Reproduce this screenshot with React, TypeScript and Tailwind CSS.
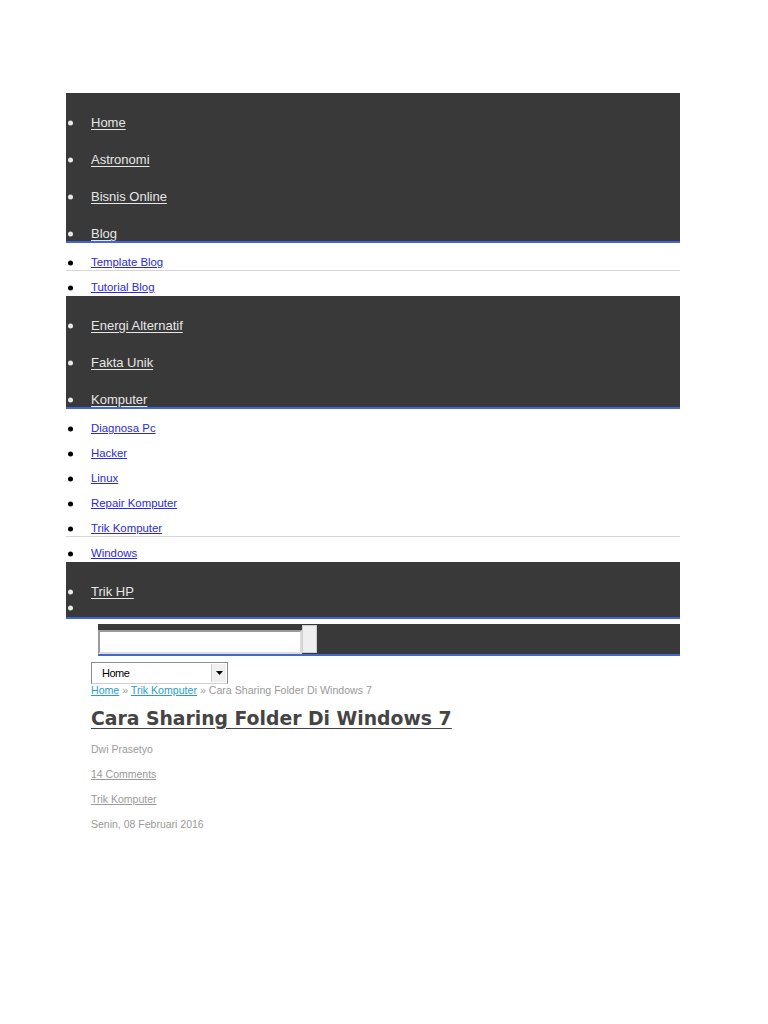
import React from 'react';

const topA = ['Home', 'Astronomi', 'Bisnis Online', 'Blog'];
const subA = ['Template Blog', 'Tutorial Blog'];
const topB = ['Energi Alternatif', 'Fakta Unik', 'Komputer'];
const subB = ['Diagnosa Pc', 'Hacker', 'Linux', 'Repair Komputer', 'Trik Komputer', 'Windows'];

const Bullet = ({ dark }: { dark?: boolean }) => (
  <span className={`absolute left-[2px] top-1/2 -translate-y-1/2 w-[5px] h-[5px] rounded-full ${dark ? 'bg-[#e8e8e8]' : 'bg-black'}`} />
);

const TopItem = ({ label }: { label: string }) => (
  <li className="relative h-[37px] flex items-end">
    <div className="relative w-full h-[15px] flex items-center">
      <Bullet dark />
      <a href="#" className="ml-[25px] text-[13px] leading-[15px] text-[#e6e6e6] underline underline-offset-2">{label}</a>
    </div>
  </li>
);

const SubItem = ({ label, line }: { label: string; line?: boolean }) => (
  <li className={`h-[25px] pt-[10px] ${line ? 'border-b border-[#d6d6d6]' : ''}`}>
    <div className="relative h-[13px] flex items-center">
      <Bullet />
      <a href="#" className="ml-[25px] text-[11.4px] leading-[13px] text-[#2a2ad8] underline underline-offset-1">{label}</a>
    </div>
  </li>
);

const DarkBlock = ({ children }: { children: React.ReactNode }) => (
  <ul className="bg-[#393939] border-b-2 border-[#4466d0]">{children}</ul>
);

const SubList = ({ items }: { items: string[] }) => (
  <ul className="pt-[3px]">
    {items.map((s, i) => (
      <SubItem key={s} label={s} line={i === items.length - 2} />
    ))}
  </ul>
);

export default function App() {
  return (
    <div className="min-h-[1024px] bg-white pt-[93px] font-['Liberation_Sans',Arial,sans-serif]">
      <div className="ml-[66px] w-[614px]">
        <DarkBlock>
          {topA.map((t) => <TopItem key={t} label={t} />)}
        </DarkBlock>
        <SubList items={subA} />
        <DarkBlock>
          {topB.map((t) => <TopItem key={t} label={t} />)}
        </DarkBlock>
        <SubList items={subB} />
        <DarkBlock>
          <TopItem label="Trik HP" />
          <li className="relative h-[18px]">
            <Bullet dark />
          </li>
        </DarkBlock>

        <div className="mt-[5px] ml-[32px] h-[32px] bg-[#393939] border-b-2 border-[#4466d0] flex">
          <div className="w-[204px] pt-[6px] flex">
            <div className="flex-1 h-[24px] bg-white border-2 border-t-[#9a9a9a] border-l-[#9a9a9a] border-r-[#dcdcdc] border-b-[#dcdcdc]" />
          </div>
          <div className="w-[15px] mt-[1px] h-[28px] bg-[#efefef] border border-[#cfcfcf]" />
        </div>

        <div className="ml-[25px] mt-[6px]">
          <div className="w-[137px] h-[22px] border border-[#8a8a8a] border-b-[#cfcfcf] bg-white flex items-center">
            <span className="ml-[10px] flex-1 text-[11px] tracking-[-0.5px] text-black">Home</span>
            <div className="w-[15px] h-[18px] mr-[1px] bg-[#f0f0f0] border-l border-[#d0d0d0] flex items-center justify-center">
              <svg width="7" height="4" viewBox="0 0 7 4"><path d="M0 0h7L3.5 4z" fill="#000" /></svg>
            </div>
          </div>
          <div className="text-[10.6px] leading-[13px] text-[#9a9a9a]">
            <a href="#" className="text-[#2a9bd0] underline underline-offset-1">Home</a>
            <span> » </span>
            <a href="#" className="text-[#2a9bd0] underline underline-offset-1">Trik Komputer</a>
            <span> » Cara Sharing Folder Di Windows 7</span>
          </div>
          <h1 className="mt-[11px] font-['DejaVu_Sans',Verdana,sans-serif] font-bold text-[18.8px] leading-[22px] text-[#444] underline underline-offset-3">
            <a href="#">Cara Sharing Folder Di Windows 7</a>
          </h1>
          <div className="mt-[13px] text-[10.5px] leading-[13px] text-[#9a9a9a] flex flex-col gap-[12px]">
            <span>Dwi Prasetyo</span>
            <a href="#" className="underline underline-offset-1">14 Comments</a>
            <a href="#" className="underline underline-offset-1">Trik Komputer</a>
            <span>Senin, 08 Februari 2016</span>
          </div>
        </div>
      </div>
    </div>
  );
}
